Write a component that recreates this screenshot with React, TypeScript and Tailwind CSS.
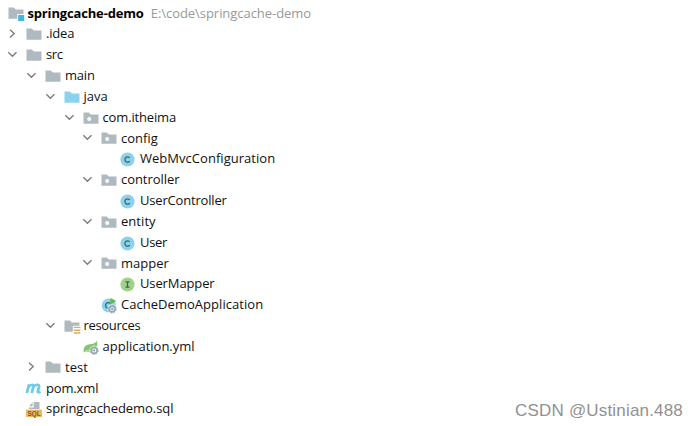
import type { ReactNode } from "react";

type Kind =
  | "module"
  | "folder"
  | "source"
  | "package"
  | "class"
  | "interface"
  | "boot"
  | "resources"
  | "spring"
  | "maven"
  | "sql";

type Node = { name: string; kind: Kind; pad: string; open?: boolean; tracking?: string };

const nodes: Node[] = [
  { name: ".idea", kind: "folder", pad: "pl-[5px]", open: false, tracking: "tracking-[-0.2px]" },
  { name: "src", kind: "folder", pad: "pl-[5px]", open: true, tracking: "tracking-[-0.4px]" },
  { name: "main", kind: "folder", pad: "pl-[24px]", open: true, tracking: "tracking-[-0.2px]" },
  { name: "java", kind: "source", pad: "pl-[42.5px]", open: true },
  { name: "com.itheima", kind: "package", pad: "pl-[61.5px]", open: true, tracking: "tracking-[-0.15px]" },
  { name: "config", kind: "package", pad: "pl-[80px]", open: true },
  { name: "WebMvcConfiguration", kind: "class", pad: "pl-[99px]", tracking: "tracking-[0.03px]" },
  { name: "controller", kind: "package", pad: "pl-[80px]", open: true, tracking: "tracking-[-0.05px]" },
  { name: "UserController", kind: "class", pad: "pl-[99px]", tracking: "tracking-[-0.18px]" },
  { name: "entity", kind: "package", pad: "pl-[80px]", open: true, tracking: "tracking-[0.05px]" },
  { name: "User", kind: "class", pad: "pl-[99px]", tracking: "tracking-[-0.35px]" },
  { name: "mapper", kind: "package", pad: "pl-[80px]", open: true },
  { name: "UserMapper", kind: "interface", pad: "pl-[99px]", tracking: "tracking-[-0.12px]" },
  { name: "CacheDemoApplication", kind: "boot", pad: "pl-[80px]", tracking: "tracking-[0.04px]" },
  { name: "resources", kind: "resources", pad: "pl-[42.5px]", open: true, tracking: "tracking-[-0.32px]" },
  { name: "application.yml", kind: "spring", pad: "pl-[61.5px]" },
  { name: "test", kind: "folder", pad: "pl-[24px]", open: false },
  { name: "pom.xml", kind: "maven", pad: "pl-[5px]", tracking: "tracking-[-0.15px]" },
  { name: "springcachedemo.sql", kind: "sql", pad: "pl-[5px]", tracking: "tracking-[-0.07px]" },
];

const folderPath = "M.5 2.500h5.300l2 2h7.700v9.300H.5z";

function Gear({ x, y }: { x: number; y: number }) {
  return (
    <g transform={`translate(${x} ${y})`}>
      <circle r="4.800" fill="#fff" opacity=".7" />
      <circle r="2.900" fill="none" stroke="#9aa7b0" strokeWidth="1.700" />
      <circle r="4" fill="none" stroke="#9aa7b0" strokeWidth="1" strokeDasharray="1.600 1.540" />
      <circle r="1" fill="#8796a0" />
    </g>
  );
}

function Icon({ kind }: { kind: Kind }) {
  const gray = "#afb9c0";
  const glyphs: Record<Kind, ReactNode> = {
    folder: <path d={folderPath} fill={gray} />,
    source: <path d={folderPath} fill="#8bd3ec" />,
    module: (
      <>
        <path d="M.5 2.500h5.300l2 2h7.700v4.600H9.300v4.700H.5z" fill={gray} />
        <rect x="10.200" y="10" width="6" height="6" fill="#40b6e0" />
      </>
    ),
    package: (
      <>
        <path d={folderPath} fill={gray} />
        <circle cx="6.200" cy="9" r="2" fill="#fff" />
      </>
    ),
    class: (
      <>
        <circle cx="7.500" cy="8.500" r="7.100" fill="#8bd3ec" />
        <path d="M9.800 6.900A2.700 2.700 0 1 0 9.800 10.100" fill="none" stroke="#45616e" strokeWidth="1.300" />
      </>
    ),
    interface: (
      <>
        <circle cx="7.500" cy="8.500" r="7.100" fill="#9fd18a" />
        <path d="M5.500 5.800h4M5.500 11.200h4M7.500 5.800v5.400" fill="none" stroke="#47613c" strokeWidth="1.200" />
      </>
    ),
    boot: (
      <>
        <circle cx="7.800" cy="8.500" r="7.100" fill="#8bd3ec" />
        <path d="M9.400 6.500A2.800 2.800 0 1 0 7.500 11.200" fill="none" stroke="#45616e" strokeWidth="1.300" />
        <path d="M9.400.9l5.900 3.200-5.900 3.200z" fill="#5bbd45" />
        <Gear x={11.2} y={12} />
      </>
    ),
    resources: (
      <>
        <path d="M.5 2.500h5.300l2 2h7.700v3.300H8.800v6H.5z" fill={gray} />
        <path d="M9.700 9.400h6.600M9.700 12.200h6.600M9.700 15h6.600" stroke="#e2ab57" strokeWidth="1.400" />
      </>
    ),
    spring: (
      <>
        <path
          d="M13.700 1.800c1.200 3.600.8 7-1.400 9-2.500 2.200-6.200 2.300-9.300 1.700L1 13.400l-.4-1.200C.2 8.700 2.300 6.200 5.800 5.500c2.900-.6 6-.3 7.900-3.700z"
          fill="#84c86d"
        />
        <path d="M2 12.200c3.500-.4 6.600-2 8.800-4.400" fill="none" stroke="#fff" strokeWidth=".7" opacity=".7" />
        <Gear x={11.2} y={11.4} />
      </>
    ),
    maven: (
      <path
        d="M1.200 13.300 3.300 4.600M2.700 7.400c1.300-2.600 4.700-3.300 4.200-.6L5.500 13.300M7 7.400c1.500-2.800 5.500-3.300 4.900-.4l-1.100 4.400c-.4 1.500.5 1.600 2.400.8"
        transform="translate(-.6 -.3) scale(1.150 1)"
        fill="none"
        stroke="#6dcae8"
        strokeWidth="2.400"
      />
    ),
    sql: (
      <>
        <path d="M3 5.300 6.600 1.200v4.100zM7.700.9h5.800v7H3V6.400h4.700z" fill={gray} />
        <rect x="0" y="8.600" width="16" height="7.400" fill="#f0b65c" />
        <text
          x="8"
          y="14.900"
          textAnchor="middle"
          textLength="13"
          lengthAdjust="spacingAndGlyphs"
          fontSize="7"
          fontWeight="700"
          fill="#725a35"
          className="font-['Liberation_Sans',sans-serif]"
        >
          SQL
        </text>
      </>
    ),
  };
  return (
    <svg viewBox="0 0 16 16" className="size-4 shrink-0 overflow-visible">
      {glyphs[kind]}
    </svg>
  );
}

function Chevron({ open }: { open?: boolean }) {
  return (
    <svg viewBox="0 0 14 14" className="mr-[7px] size-3.5 shrink-0">
      {open !== undefined && (
        <path
          d={open ? "M3.300 4.200 7.400 8.300l4.100-4.100" : "M5 2.700 9.200 6.600 5 10.500"}
          fill="none"
          stroke="#7d7d7d"
          strokeWidth="1.400"
        />
      )}
    </svg>
  );
}

export default function App() {
  return (
    <div className="flex h-[426px] w-[698px] justify-between overflow-hidden bg-white pt-[3px] font-['Open_Sans','Noto_Sans',sans-serif] text-[13px] text-[#111]">
      <div className="flex flex-col">
        <div className="flex h-[20.840px] items-center pl-[7.500px]">
          <Icon kind="module" />
          <span className="ml-1 font-bold tracking-[-0.160px] text-black">springcache-demo</span>
          <span className="ml-[7px] tracking-[-0.050px] whitespace-nowrap text-[#999]">{"E:\\code\\springcache-demo"}</span>
        </div>
        {nodes.map((n) => (
          <div key={n.name} className={`flex h-[20.840px] items-center ${n.pad}`}>
            <Chevron open={n.open} />
            <Icon kind={n.kind} />
            <span className={`ml-1 whitespace-nowrap ${n.tracking ?? ""}`}>{n.name}</span>
          </div>
        ))}
      </div>
      <div className="self-end pr-[15px] pb-[3px] font-['Liberation_Sans',sans-serif] text-[17px] leading-[24px] tracking-[0.180px] whitespace-nowrap text-[#919191]">
        CSDN @Ustinian.488
      </div>
    </div>
  );
}
